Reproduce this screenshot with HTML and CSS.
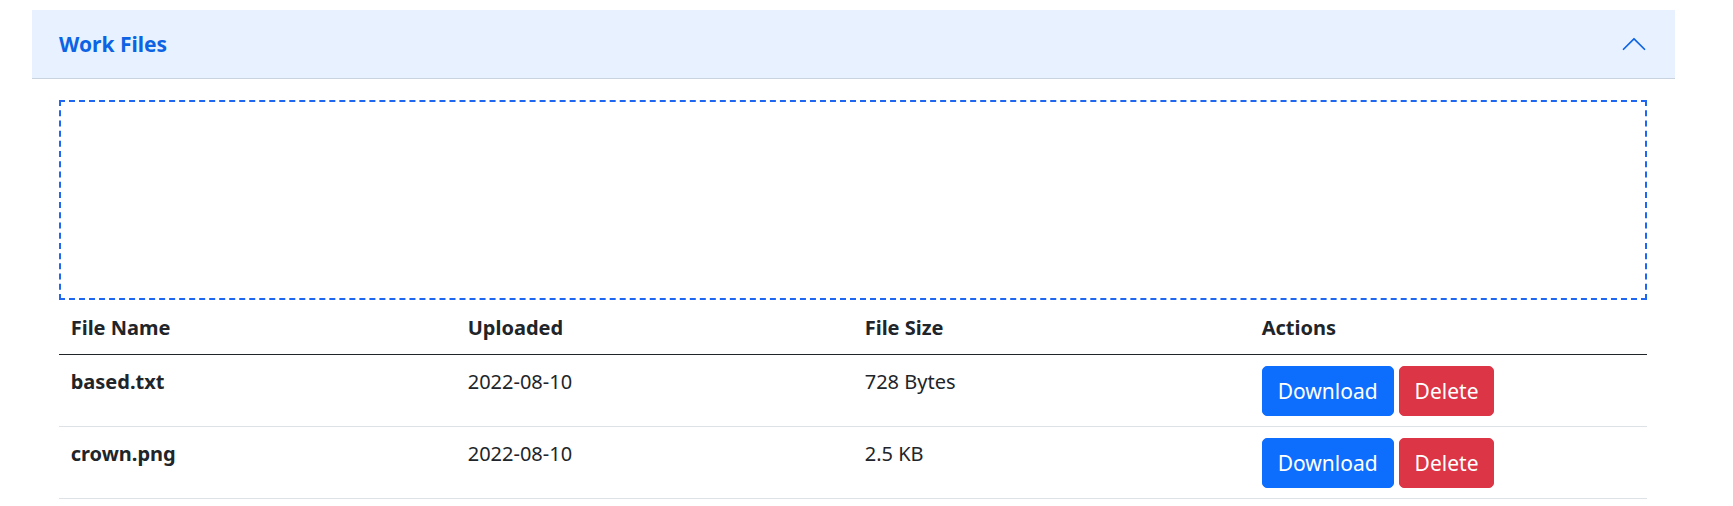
FILE: index.html
```html
<!DOCTYPE html>
<html lang="en">
<head>
<meta charset="utf-8">
<title>Work Files</title>
<link rel="stylesheet" href="styles.css">
</head>
<body>
<div class="accordion">
  <div class="acc-header">
    <span class="acc-title">Work Files</span>
    <svg class="acc-chevron" viewBox="0 0 16 16" width="28" height="28" aria-hidden="true">
      <path fill="#0c63e4" transform="rotate(180 8 8)" d="M1.646 4.646a.5.5 0 0 1 .708 0L8 10.293l5.646-5.647a.5.5 0 0 1 .708.708l-6 6a.5.5 0 0 1-.708 0l-6-6a.5.5 0 0 1 0-.708z"/>
    </svg>
  </div>
  <div class="acc-body">
    <div class="dropzone"></div>
    <table class="files">
      <thead>
        <tr>
          <th>File Name</th>
          <th>Uploaded</th>
          <th>File Size</th>
          <th>Actions</th>
        </tr>
      </thead>
      <tbody>
        <tr>
          <td class="name">based.txt</td>
          <td>2022-08-10</td>
          <td>728 Bytes</td>
          <td class="actions"><div class="btns"><button class="btn btn-primary">Download</button><button class="btn btn-danger">Delete</button></div></td>
        </tr>
        <tr>
          <td class="name">crown.png</td>
          <td>2022-08-10</td>
          <td>2.5 KB</td>
          <td class="actions"><div class="btns"><button class="btn btn-primary">Download</button><button class="btn btn-danger">Delete</button></div></td>
        </tr>
      </tbody>
    </table>
  </div>
</div>
</body>
</html>
```

FILE: styles.css
```css
html, body {
  background: #ffffff;
}
body {
  margin: 10px 58px 0 32px;
  font-family: "Noto Sans", "Open Sans", sans-serif;
  color: #212529;
}
.accordion {
  background: #ffffff;
}
.acc-header {
  display: flex;
  align-items: center;
  justify-content: space-between;
  height: 68px;
  padding: 0 27px;
  background: #e7f1ff;
  border-bottom: 1px solid #c9d3df;
}
.acc-title {
  font-size: 21px;
  font-weight: 700;
  color: #0c63e4;
  line-height: 30px;
}
.acc-chevron {
  display: block;
  flex: none;
}
.acc-body {
  padding: 21px 28px 0 27px;
}
.dropzone {
  height: 196px;
  border: 2px dashed #1f66f0;
}
.files {
  width: 100%;
  border-collapse: collapse;
  table-layout: fixed;
  font-size: 20px;
  line-height: 30px;
}
.files th {
  text-align: left;
  font-weight: 700;
  padding: 12.5px 11.7px 11.5px;
  border-bottom: 1px solid #212529;
}
.files td {
  vertical-align: top;
  padding: 12px 11.7px 0;
  border-bottom: 1px solid #dee2e6;
}
.files td.name {
  font-weight: 700;
}
.files td.actions {
  padding: 10.5px 11.7px 10.5px 11.7px;
}
.btns {
  display: flex;
  gap: 5px;
}
.btn {
  height: 50px;
  padding: 0 15px;
  border: 1px solid transparent;
  border-radius: 5px;
  font-family: "Noto Sans", "Open Sans", sans-serif;
  font-size: 21px;
  line-height: 30px;
  color: #ffffff;
  cursor: pointer;
}
.btn-primary {
  background: #0d6efd;
  border-color: #0d6efd;
}
.btn-danger {
  background: #dc3545;
  border-color: #dc3545;
}
```
